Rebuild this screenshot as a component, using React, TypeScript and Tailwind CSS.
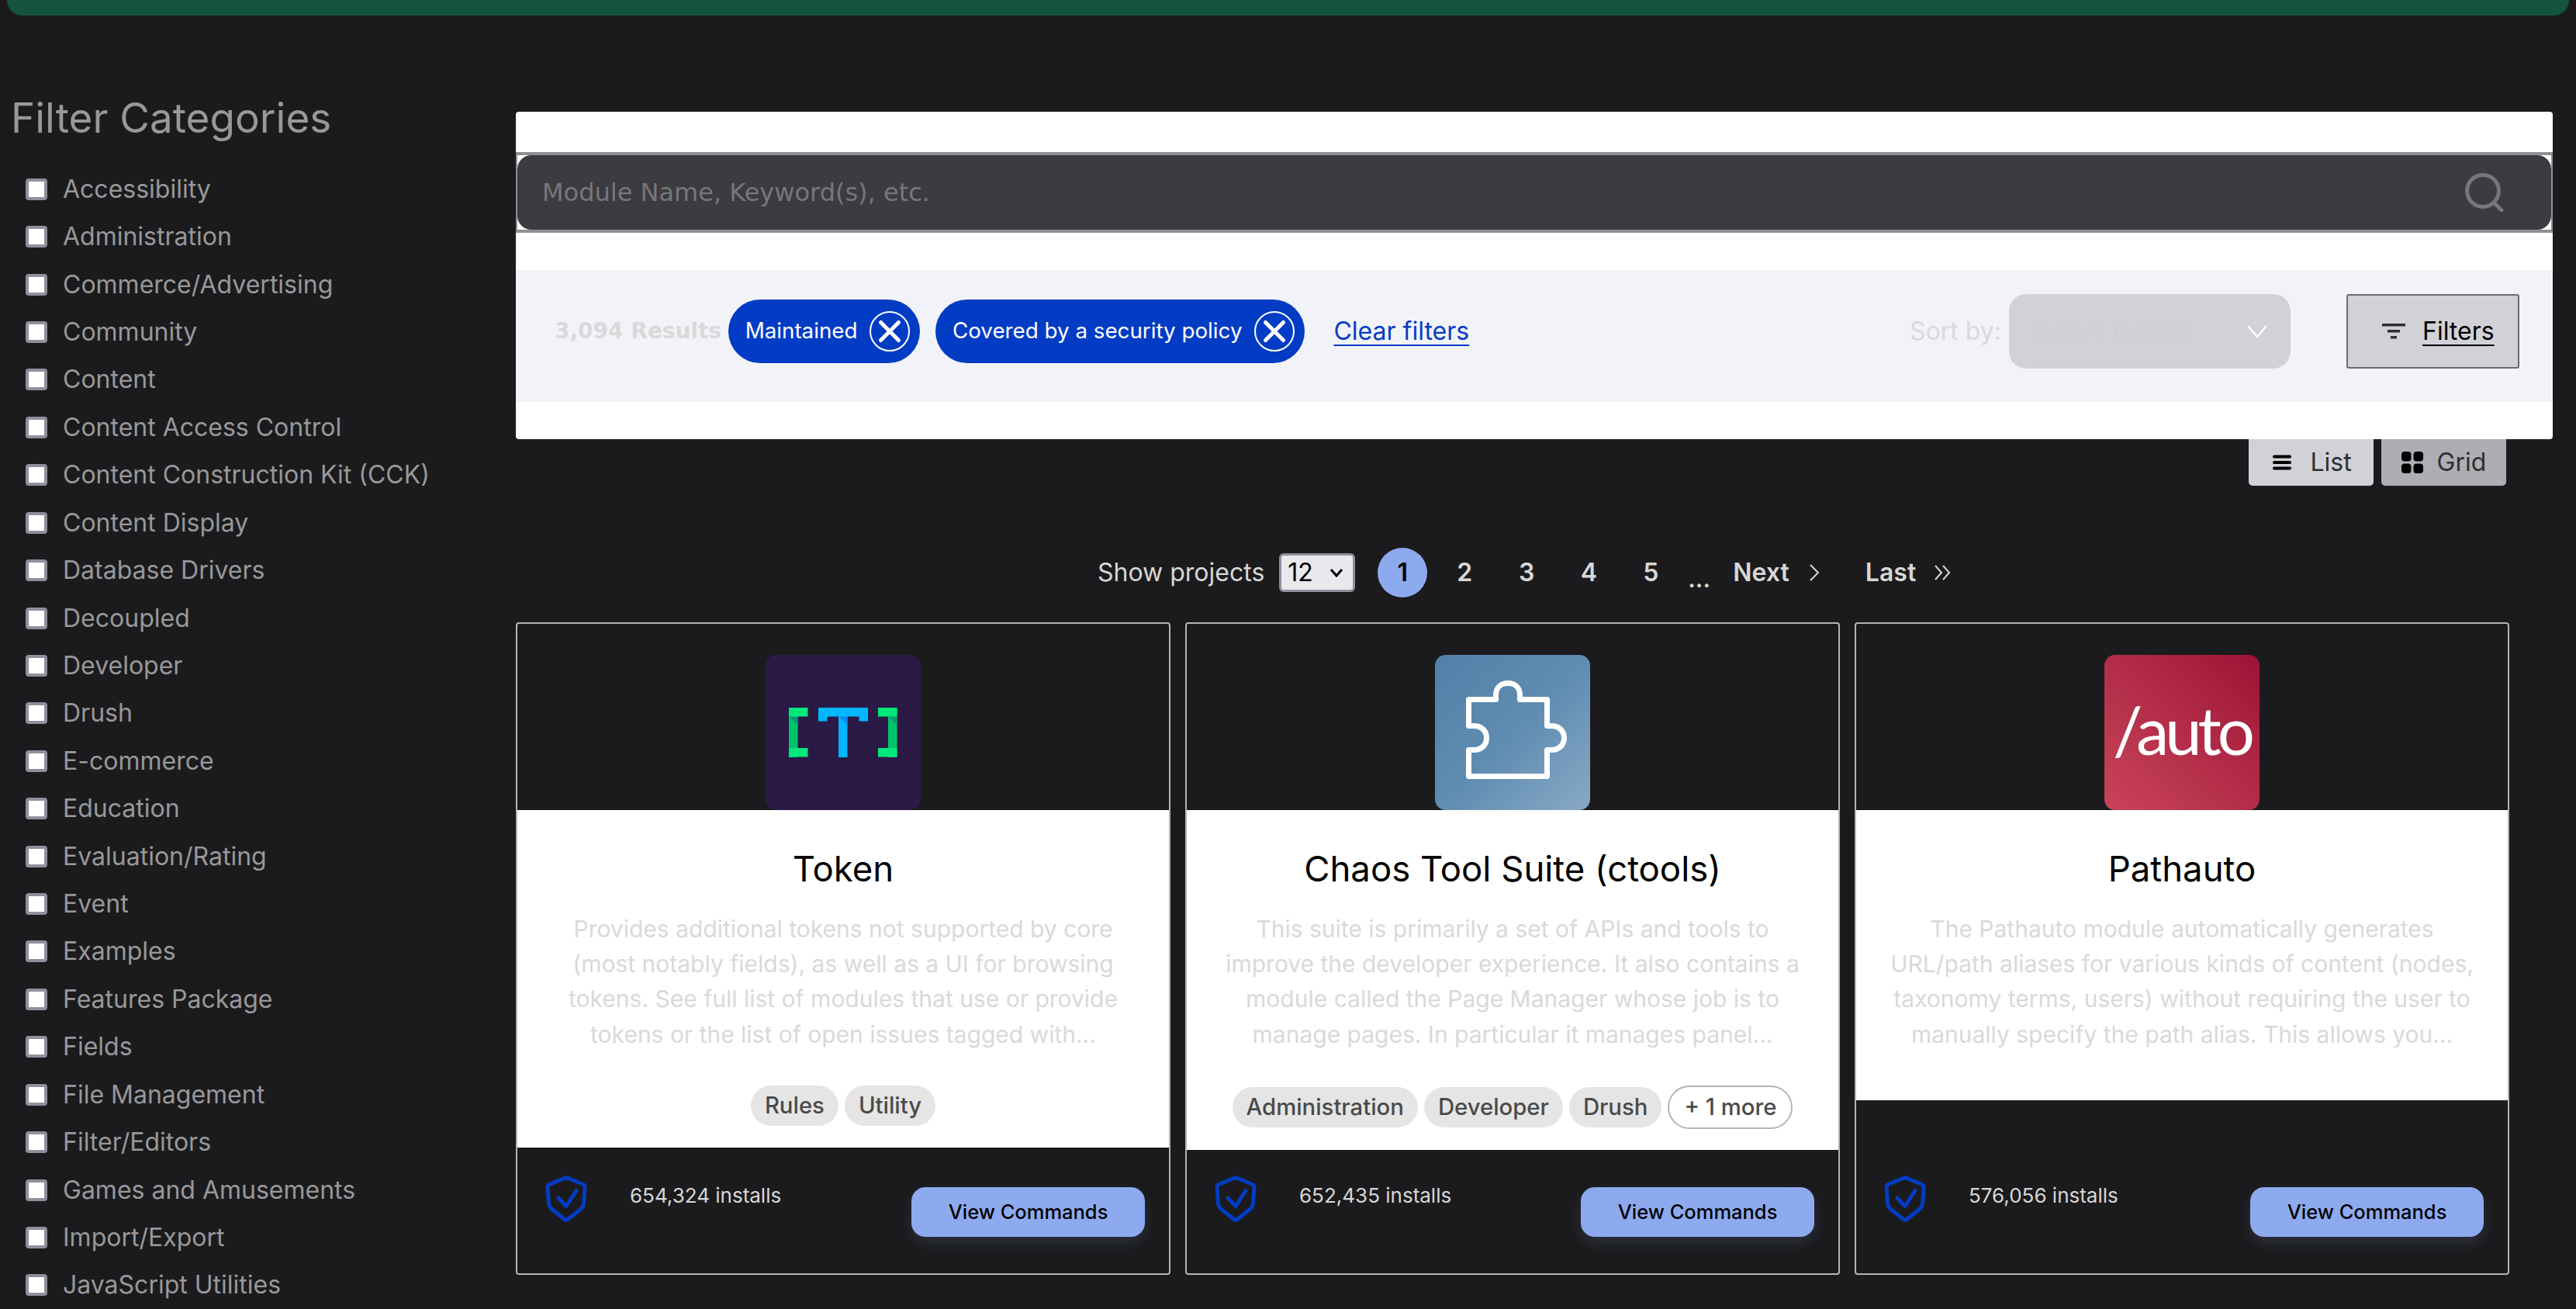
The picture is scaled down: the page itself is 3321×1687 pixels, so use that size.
import React from "react";

const categories = [
  "Accessibility",
  "Administration",
  "Commerce/Advertising",
  "Community",
  "Content",
  "Content Access Control",
  "Content Construction Kit (CCK)",
  "Content Display",
  "Database Drivers",
  "Decoupled",
  "Developer",
  "Drush",
  "E-commerce",
  "Education",
  "Evaluation/Rating",
  "Event",
  "Examples",
  "Features Package",
  "Fields",
  "File Management",
  "Filter/Editors",
  "Games and Amusements",
  "Import/Export",
  "JavaScript Utilities",
];

function CloseCircle() {
  return (
    <svg width="52" height="52" viewBox="0 0 52 52" fill="none" stroke="white" className="shrink-0">
      <circle cx="26" cy="26" r="25" strokeWidth="2" />
      <path d="M14.5 14.5 37.5 37.5M37.5 14.5 14.5 37.5" strokeWidth="5" strokeLinecap="round" />
    </svg>
  );
}

function Pill({ label }: { label: string }) {
  return (
    <div className="flex h-[82px] items-center gap-[16px] rounded-[41px] bg-[#033cc4] pl-[21.5px] pr-[13px] text-[27.75px] text-white">
      <span className="whitespace-nowrap">{label}</span>
      <CloseCircle />
    </div>
  );
}

function Shield() {
  return (
    <svg width="54" height="60" viewBox="0 0 54 60" fill="none" stroke="#033cc4" strokeWidth="5" className="shrink-0">
      <path d="M27 2.5 48 11Q51 12.2 51 15L49.5 36Q49 40 46 43L29 56.5Q27 58 25 56.5L8 43Q5 40 4.5 36L3 15Q3 12.2 6 11Z" strokeLinejoin="round" />
      <path d="M17 29 27 39.5 40 19.5" strokeLinecap="round" strokeLinejoin="round" />
    </svg>
  );
}

function TokenLogo() {
  return (
    <div className="h-[200px] w-[200px] overflow-hidden rounded-[14px] bg-[#2b1a45]">
      <svg width="200" height="200" viewBox="0 0 200 200">
        <rect x="30" y="68" width="11.5" height="64" fill="#00c46a" />
        <polygon points="30,79 41.5,79 41.5,91" fill="#089a78" />
        <rect x="30" y="68" width="24.5" height="11.5" fill="#00e87a" />
        <rect x="30" y="120" width="24.5" height="11.5" fill="#00e87a" />
        <rect x="158" y="68" width="11.5" height="64" fill="#00c46a" />
        <polygon points="158,79 169.5,79 169.5,91" fill="#089a78" />
        <rect x="145" y="68" width="24.5" height="11.5" fill="#00e87a" />
        <rect x="145" y="120" width="24.5" height="11.5" fill="#00e87a" />
        <rect x="68" y="68" width="64" height="11.5" fill="#00b7ff" />
        <rect x="68" y="68" width="11.5" height="17.5" fill="#00b7ff" />
        <rect x="120.5" y="68" width="11.5" height="17.5" fill="#00b7ff" />
        <rect x="94" y="68" width="11.5" height="64" fill="#00b7ff" />
        <polygon points="94,79.5 105.5,79.5 105.5,91" fill="#0a8cf5" />
      </svg>
    </div>
  );
}

function ChaosLogo() {
  return (
    <div className="h-[200px] w-[200px] overflow-hidden rounded-[14px] bg-gradient-to-br from-[#5280a9] via-[#5f8cb1] to-[#88a9c5]">
      <svg width="200" height="200" viewBox="0 0 200 200" fill="none" stroke="white" strokeWidth="7" strokeLinejoin="round">
        <path d="M43.5 57.5H78.5V52C78.5 42 85 36.5 94 36.5 103 36.5 109.5 42 109.5 52V57.5H144.5V91.5H150C160 91.5 166.5 98 166.5 107 166.5 116 160 122.5 150 122.5H144.5V156.5H43.5V122.5H50C60 122.5 66.5 116 66.5 107 66.5 98 60 91.5 50 91.5H43.5Z" />
      </svg>
    </div>
  );
}

function AutoLogo() {
  return (
    <div className="flex h-[200px] w-[200px] items-center justify-center rounded-[14px] bg-gradient-to-tr from-[#c8435a] to-[#9d1136] pb-[7px]">
      <span className="text-[85px] leading-none tracking-[-5px] text-white font-['Lato',sans-serif]">/auto</span>
    </div>
  );
}

function ProjectCard({
  logo,
  title,
  lines,
  tags,
  more,
  installs,
}: {
  logo: React.ReactNode;
  title: string;
  lines: string[];
  tags: string[];
  more?: string;
  installs: string;
}) {
  return (
    <article className="flex h-[841px] w-[844px] flex-col overflow-hidden rounded-[4px] border-[2.5px] border-[#b5b5b5]">
      <div className="flex h-[240px] shrink-0 items-end justify-center">{logo}</div>
      <div className={`flex flex-col items-center bg-white text-center ${tags.length ? "" : "pb-[62px]"}`}>
        <h3 className="mt-[46px] text-[45.5px] leading-[60px] text-black">{title}</h3>
        <p className="mt-[25px] text-[30px] leading-[45.2px] text-[#d9d9d9]">
          {lines.map((line) => (
            <span key={line} className="block whitespace-nowrap">{line}</span>
          ))}
        </p>
        {tags.length > 0 && (
          <div className={`mt-[43px] flex items-center gap-[8px] ${more ? "mb-[27px]" : "mb-[28px]"}`}>
            {tags.map((tag) => (
              <span key={tag} className="flex h-[52px] items-center rounded-[26px] bg-[#e5e5e5] px-[18px] text-[29.3px] font-medium text-[#4a4a4a]">{tag}</span>
            ))}
            {more && (
              <span className="flex h-[56px] items-center rounded-[28px] border-[2.5px] border-[#b5b5b5] bg-white px-[19px] text-[29.3px] font-medium text-[#4a4a4a]">{more}</span>
            )}
          </div>
        )}
      </div>
      <div className="flex flex-1 items-end justify-between pb-[47px] pl-[36px] pr-[31px]">
        <div className="mb-[19px] flex items-center gap-[55px]">
          <Shield />
          <span className="pb-[9px] text-[26px] text-[#d7d7d7]">{installs}</span>
        </div>
        <button className="h-[64px] w-[301px] rounded-[18px] bg-[#8eaaef] text-[25.5px] font-medium text-black shadow-[0_8px_16px_rgba(142,170,239,0.15)]">View Commands</button>
      </div>
    </article>
  );
}

export default function App() {
  return (
    <div className="h-[1687px] w-[3321px] overflow-hidden bg-[#1b1b1d] font-['Inter',sans-serif]">
      <div className="mx-[9px] h-[20px] rounded-b-[24px] bg-[#14533f]" />
      <div className="flex">
        {/* Sidebar */}
        <aside className="w-[665px] shrink-0 pl-[14px] pt-[96px]">
          <h2 className="text-[53px] leading-[72px] text-[#98989a]">Filter Categories</h2>
          <ul className="mt-[25px] pl-[19px]">
            {categories.map((cat) => (
              <li key={cat} className="flex h-[61.43px] items-center gap-[20px] text-[32px] text-[#98989a]">
                <span className="h-[28px] w-[28px] shrink-0 rounded-[4px] border-[4px] border-[#8f8f9d] bg-white" />
                <span className="whitespace-nowrap">{cat}</span>
              </li>
            ))}
          </ul>
        </aside>

        <main className="w-[2626px] pt-[124px]">
          {/* Search and filter panel */}
          <section className="h-[422px] rounded-[4px] bg-white pt-[52px]">
            <div className="h-[104px] border-x-[2px] border-y-[4px] border-[#8f8f92] bg-white">
              <div className="flex h-full items-center justify-between rounded-[18px] bg-[#3c3b40] pl-[32px] pr-[61px]">
                <span className="text-[32px] text-[#77767b] font-['DejaVu_Sans',sans-serif]">Module Name, Keyword(s), etc.</span>
                <svg width="50" height="50" viewBox="0 0 50 50" fill="none" stroke="#77767b" strokeWidth="5" strokeLinecap="round">
                  <circle cx="23" cy="23" r="20.5" />
                  <path d="M37 38 47 48" />
                </svg>
              </div>
            </div>
            <div className="mt-[48px] flex h-[170px] items-center bg-[#f2f3f8] pb-[12px] pl-[50px] pr-[43px]">
              <span className="whitespace-nowrap text-[28px] font-bold text-[#d9d9d9] font-['DejaVu_Sans',sans-serif]">3,094 Results</span>
              <div className="ml-[9px] flex gap-[20px]">
                <Pill label="Maintained" />
                <Pill label="Covered by a security policy" />
              </div>
              <a className="ml-[37px] whitespace-nowrap text-[32px] text-[#033cc4] underline decoration-2 underline-offset-[6px]">Clear filters</a>
              <span className="ml-auto whitespace-nowrap text-[32px] text-[#d9d9d9]">Sort by:</span>
              <div className="ml-[10px] flex h-[96px] w-[363px] items-center justify-between rounded-[22px] bg-[#d1d2d7] pl-[30px] pr-[30px]">
                <span className="text-[32px] text-[#cfd0d5]">Active installs</span>
                <svg width="26" height="16" viewBox="0 0 26 16" fill="none" stroke="white" strokeWidth="2.5"><path d="M1 1 13 15 25 1" /></svg>
              </div>
              <button className="ml-[72px] flex h-[96px] w-[223px] items-center gap-[22px] rounded-[3px] border-[2px] border-[#6b6b70] bg-[#d1d2d7] pl-[44px] text-[32px] text-black">
                <svg width="30" height="20" viewBox="0 0 30 20" fill="#2e2e33">
                  <rect x="0" y="0" width="30" height="3.5" />
                  <rect x="7" y="8" width="16" height="3.5" />
                  <rect x="11" y="16" width="8" height="3.5" />
                </svg>
                <span className="underline decoration-2 underline-offset-[6px]">Filters</span>
              </button>
            </div>
          </section>

          {/* List / Grid toggle */}
          <div className="flex justify-end gap-[10px] pr-[60px]">
            <div className="flex h-[60px] w-[161px] items-center justify-center gap-[24px] rounded-b-[5px] bg-[#d1d2d7] pl-[3px] text-[32px] text-[#2e2e33]">
              <svg width="24" height="24" viewBox="0 0 24 24" fill="black">
                <rect y="2.5" width="24" height="4" rx="2" />
                <rect y="10" width="24" height="4" rx="2" />
                <rect y="17.5" width="24" height="4" rx="2" />
              </svg>
              List
            </div>
            <div className="flex h-[60px] w-[161px] items-center justify-center gap-[18px] rounded-b-[5px] bg-[#adaeb3] text-[32px] text-[#2e2e33]">
              <svg width="28" height="28" viewBox="0 0 28 28" fill="black">
                <rect width="12.5" height="12.5" rx="4" />
                <rect x="15.5" width="12.5" height="12.5" rx="4" />
                <rect y="15.5" width="12.5" height="12.5" rx="4" />
                <rect x="15.5" y="15.5" width="12.5" height="12.5" rx="4" />
              </svg>
              Grid
            </div>
          </div>

          {/* Pagination */}
          <div className="mt-[80px] flex h-[64px] items-center pl-[750px] text-[#d7d7d7]">
            <span className="text-[32px]">Show projects</span>
            <div className="ml-[19px] flex h-[50px] w-[98px] items-center justify-between rounded-[6px] border-[3px] border-[#8f8f9d] bg-[#e9e9ed] pl-[8px] pr-[12px] text-[32px] text-black">
              12
              <svg width="18" height="12" viewBox="0 0 18 12" fill="none" stroke="black" strokeWidth="3"><path d="M2 2 9 10 16 2" /></svg>
            </div>
            <span className="ml-[29px] flex h-[64px] w-[64px] items-center justify-center rounded-full bg-[#8eaaef] text-[32px] font-semibold text-black">1</span>
            {["2", "3", "4", "5"].map((n) => (
              <span key={n} className="ml-[16px] flex h-[64px] w-[64px] items-center justify-center text-[32px] font-semibold">{n}</span>
            ))}
            <span className="ml-[16px] w-[32px] self-end pb-[12px] text-[30px] font-semibold leading-[24px]">...</span>
            <span className="ml-[26px] text-[32px] font-semibold">Next</span>
            <svg className="ml-[24px]" width="16" height="26" viewBox="0 0 16 26" fill="none" stroke="#d7d7d7" strokeWidth="2"><path d="M3 3 13 13 3 23" /></svg>
            <span className="ml-[58px] text-[32px] font-semibold">Last</span>
            <svg className="ml-[22px]" width="24" height="26" viewBox="0 0 24 26" fill="none" stroke="#d7d7d7" strokeWidth="2"><path d="M3 4 11 13 3 22M13 4 21 13 13 22" /></svg>
          </div>

          {/* Project cards */}
          <div className="mt-[32px] flex gap-[19px]">
            <ProjectCard
              logo={<TokenLogo />}
              title="Token"
              lines={[
                "Provides additional tokens not supported by core",
                "(most notably fields), as well as a UI for browsing",
                "tokens. See full list of modules that use or provide",
                "tokens or the list of open issues tagged with...",
              ]}
              tags={["Rules", "Utility"]}
              installs="654,324 installs"
            />
            <ProjectCard
              logo={<ChaosLogo />}
              title="Chaos Tool Suite (ctools)"
              lines={[
                "This suite is primarily a set of APIs and tools to",
                "improve the developer experience. It also contains a",
                "module called the Page Manager whose job is to",
                "manage pages. In particular it manages panel...",
              ]}
              tags={["Administration", "Developer", "Drush"]}
              more="+ 1 more"
              installs="652,435 installs"
            />
            <ProjectCard
              logo={<AutoLogo />}
              title="Pathauto"
              lines={[
                "The Pathauto module automatically generates",
                "URL/path aliases for various kinds of content (nodes,",
                "taxonomy terms, users) without requiring the user to",
                "manually specify the path alias. This allows you...",
              ]}
              tags={[]}
              installs="576,056 installs"
            />
          </div>
        </main>
      </div>
    </div>
  );
}
